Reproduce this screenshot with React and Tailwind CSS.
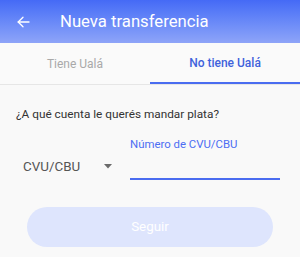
import React from "react";

export default function App() {
  return (
    <div className="w-[300px] h-[257px] bg-[#f9f9f9] overflow-hidden" style={{ fontFamily: "Roboto, 'Noto Sans', sans-serif" }}>
      <div className="h-[43px] flex items-center bg-gradient-to-b from-[#456af6] to-[#8ea4f8]">
        <div className="w-[60px] flex items-center pl-[17px]">
          <svg width="13" height="12" viewBox="0 0 13 12" fill="none" stroke="white" strokeWidth="1.3" strokeLinecap="round" strokeLinejoin="round">
            <path d="M12 6H1.2" />
            <path d="M6 1.2L1.2 6L6 10.8" />
          </svg>
        </div>
        <span className="text-[16.7px] leading-[20px] text-white">Nueva transferencia</span>
      </div>
      <div className="h-[42px] flex bg-[#fafafa] border-b border-[#e6e6e6]">
        <div className="flex-1 flex items-center justify-center text-[12px] text-[#a9a9a9]">Tiene Ualá</div>
        <div className="flex-1 flex items-center justify-center text-[12px] font-medium text-[#3f62dc] border-b-2 border-[#4a6cf0] h-[41px]">No tiene Ualá</div>
      </div>
      <div className="pt-[21px] pl-[16px] text-[11.8px] leading-[16px] text-[#333]">¿A qué cuenta le querés mandar plata?</div>
      <div className="flex items-end mt-[15px] pr-[20px]">
        <div className="w-[130px] flex items-center pl-[23px] mb-[3px] h-[20px]">
          <span className="text-[13.4px] leading-[20px] text-[#555]">CVU/CBU</span>
          <svg className="ml-[24px] mb-[2px]" width="8" height="5" viewBox="0 0 8 5"><path d="M0 0H8L4 4.5Z" fill="#6b6b6b" /></svg>
        </div>
        <div className="flex-1 flex flex-col">
          <span className="text-[11.4px] leading-[14px] text-[#4d6ef3]">Número de CVU/CBU</span>
          <div className="h-[29px] border-b-2 border-[#4a6cf0]" />
        </div>
      </div>
      <div className="mt-[27px] mx-[27px] h-[40px] rounded-full bg-[#dee5fd] flex items-center justify-center">
        <span className="text-[13.4px] text-white">Seguir</span>
      </div>
    </div>
  );
}
